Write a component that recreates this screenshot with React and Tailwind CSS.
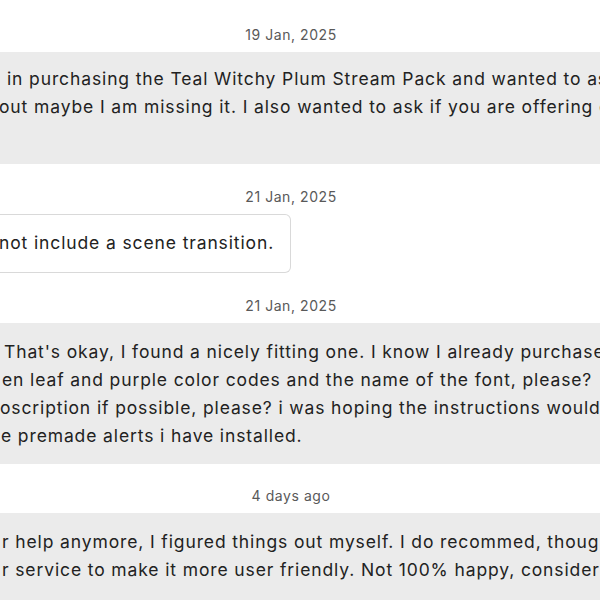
import React from 'react'

const font = { fontFamily: 'Inter, "Noto Sans", sans-serif' }

const DateLabel = ({ top = 'mt-[23px]', children }) => (
  <div className={`${top} mb-[7px] pr-[18px] text-center text-[14px] tracking-[0.04em] leading-[20px] text-[#595959]`}>
    {children}
  </div>
)

// each line is kept on its own row, the bubble runs past both edges of the window
const Line = ({ offset, children }) => (
  <div className={`whitespace-nowrap ${offset}`}>{children}</div>
)

const body = 'text-[17.5px] tracking-[0.05em] leading-[28px]'

const App = () => {
  return (
    <div className="w-[600px] h-[600px] overflow-hidden bg-white text-[#222222]" style={font}>
      <div className="pt-[2px]">
        <DateLabel>19 Jan, 2025</DateLabel>
        <div className={`bg-[#ebebeb] pt-[13px] pb-[15px] ${body}`}>
          <Line offset="ml-[7px]">in purchasing the Teal Witchy Plum Stream Pack and wanted to ask</Line>
          <Line offset="-ml-[1px]">out maybe I am missing it. I also wanted to ask if you are offering custom</Line>
          <Line offset="ml-0">&nbsp;</Line>
        </div>

        <DateLabel>21 Jan, 2025</DateLabel>
        <div className={`w-[291px] rounded-r-md border border-l-0 border-[#d9d9d9] bg-white pt-[14px] pb-[15px] overflow-hidden ${body}`}>
          <Line offset="-ml-[1px]">not include a scene transition.</Line>
        </div>

        <DateLabel>21 Jan, 2025</DateLabel>
        <div className={`mt-[1px] bg-[#ebebeb] pt-[15px] pb-[14px] ${body}`}>
          <Line offset="ml-[4px]">That's okay, I found a nicely fitting one. I know I already purchased</Line>
          <Line offset="ml-[2px]">en leaf and purple color codes and the name of the font, please?</Line>
          <Line offset="ml-0">oscription if possible, please? i was hoping the instructions would</Line>
          <Line offset="ml-[1px]">e premade alerts i have installed.</Line>
        </div>

        <DateLabel top="mt-[22px]">4 days ago</DateLabel>
        <div className={`bg-[#ebebeb] pt-[15px] pb-[14px] ${body}`}>
          <Line offset="ml-[2px]">r help anymore, I figured things out myself. I do recommed, though,</Line>
          <Line offset="ml-[2px]">r service to make it more user friendly. Not 100% happy, considering</Line>
          <Line offset="ml-0">&nbsp;</Line>
        </div>
      </div>
    </div>
  )
}

export default App
